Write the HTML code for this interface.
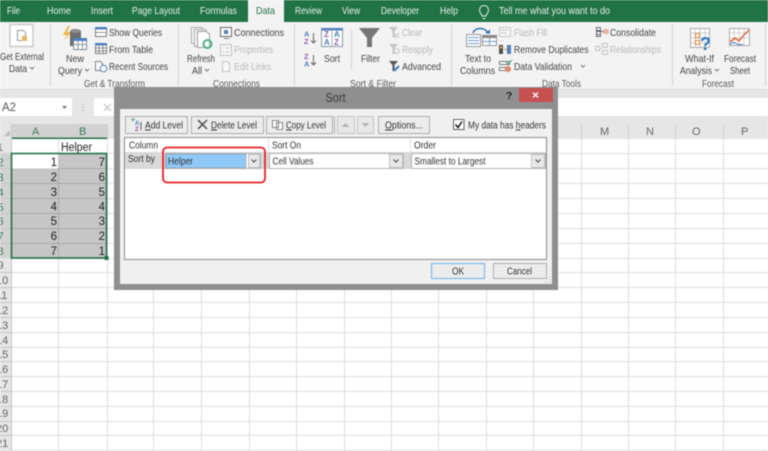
<!DOCTYPE html>
<html><head><meta charset="utf-8"><title>Excel Sort</title>
<style>
html,body{margin:0;padding:0;background:#fff;width:768px;height:451px;overflow:hidden}
svg{display:block;filter:blur(.4px)}
text{font-family:"Liberation Sans",sans-serif;font-size:10.4px;fill:#444;white-space:pre}
.t{fill:#e6f0ea;font-size:10.5px}
.d{fill:#b9b9b9}
.g{fill:#5a5a5a}
.h{fill:#3a7a55;font-size:11px}
.r{fill:#666;font-size:11px}
.n{fill:#222;font-size:11.500px}
.dg{fill:#333;font-size:9.900px}
.btn{fill:#ececec;stroke:#adadad}
.cb{fill:#fff;stroke:#b5b5b5}
.ab{fill:#e8e8e8;stroke:#c2c2c2}
</style></head><body>
<svg width="768" height="451" viewBox="0 0 768 451" xmlns="http://www.w3.org/2000/svg">
<!-- sheet -->
<rect width="768" height="451" fill="#fff"/>
<g stroke="#dcdcdc" stroke-width="1">
<path d="M12 153.5H768M12 168.5H768M12 183.5H768M12 198.5H768M12 213.5H768M12 228.5H768M12 243.5H768M12 258.5H768M12 272.5H768M12 287.5H768M12 302.5H768M12 317.5H768M12 332.5H768M12 347.5H768M12 361.5H768M12 376.5H768M12 391.5H768M12 406.5H768M12 421.5H768M12 435.5H768M12 450.5H768"/>
<path d="M58.500 139V451M107.500 139V451M153.500 139V451M201.500 139V451M249.500 139V451M296.500 139V451M344.500 139V451M391.500 139V451M438.500 139V451M486.500 139V451M533.500 139V451M581.500 139V451M628.500 139V451M675.500 139V451M723.500 139V451"/>
</g>
<!-- tabs -->
<rect width="768" height="22" fill="#217346"/>
<rect x="248" width="36" height="23" fill="#f3f3f3"/>
<text class="t" x="7" y="14" textLength="13" lengthAdjust="spacingAndGlyphs">File</text>
<text class="t" x="47" y="14" textLength="24" lengthAdjust="spacingAndGlyphs">Home</text>
<text class="t" x="91" y="14" textLength="22" lengthAdjust="spacingAndGlyphs">Insert</text>
<text class="t" x="132" y="14" textLength="48" lengthAdjust="spacingAndGlyphs">Page Layout</text>
<text class="t" x="200" y="14" textLength="37" lengthAdjust="spacingAndGlyphs">Formulas</text>
<text x="256" y="14" textLength="19" lengthAdjust="spacingAndGlyphs" style="fill:#217346;font-size:10.500px">Data</text>
<text class="t" x="295" y="14" textLength="27" lengthAdjust="spacingAndGlyphs">Review</text>
<text class="t" x="342" y="14" textLength="18" lengthAdjust="spacingAndGlyphs">View</text>
<text class="t" x="381" y="14" textLength="38" lengthAdjust="spacingAndGlyphs">Developer</text>
<text class="t" x="440" y="14" textLength="18" lengthAdjust="spacingAndGlyphs">Help</text>
<path d="M482 16c0-2-2.500-2.500-2.500-6a4.500 4.500 0 0 1 9 0c0 3.500-2.500 4-2.500 6zM482.500 18.500h3" fill="none" stroke="#e6f0ea"/>
<text class="t" x="499" y="14" textLength="111" lengthAdjust="spacingAndGlyphs">Tell me what you want to do</text>
<!-- ribbon -->
<rect y="22" width="768" height="68" fill="#f3f3f3"/>
<rect y="89" width="768" height="1" fill="#dcdcdc"/>
<rect y="90" width="768" height="34" fill="#e6e6e6"/>
<path d="M50.500 24V86M178.500 24V86M294.500 24V86M351.500 30V70M451.500 24V86M672.500 24V86M765.500 24V86" stroke="#d4d4d4"/>
<!-- Get External Data -->
<rect x="10" y="24.500" width="23" height="22" fill="#fff" stroke="#c9c9c9" stroke-width="1.500"/>
<path d="M17.500 30.500h6l2 2v8h-8z" fill="#fff" stroke="#9a9a9a"/>
<rect x="22" y="36" width="5" height="5" fill="#e9b763"/>
<text x="0" y="60" textLength="44" lengthAdjust="spacingAndGlyphs">Get External</text>
<text x="9" y="72" textLength="18" lengthAdjust="spacingAndGlyphs">Data</text>
<path d="M30 67l2 2 2-2" fill="none" stroke="#777"/>
<!-- New Query -->
<path d="M68 26l-5 9h4l-3 6 7-9h-4l3-6z" fill="#edb649"/>
<path d="M70 32c0-3 11-3 11 0v14H70z" fill="#6d6d6d"/>
<ellipse cx="75.500" cy="31" rx="5.500" ry="2" fill="#8c8c8c"/>
<rect x="73.500" y="38.500" width="13" height="11" fill="#fff" stroke="#7c8b9a"/>
<rect x="73" y="38" width="14" height="3" fill="#4f81bd"/>
<path d="M73.500 44.500h13M78 41v8M82.500 41v8" stroke="#8a9aa8"/>
<text x="66" y="62" textLength="18" lengthAdjust="spacingAndGlyphs">New</text>
<text x="58" y="74" textLength="24" lengthAdjust="spacingAndGlyphs">Query</text>
<path d="M85 69l2 2 2-2" fill="none" stroke="#777"/>
<!-- Small buttons -->
<rect x="95.500" y="27.500" width="11" height="9" fill="#fff" stroke="#7f7f7f"/><rect x="95" y="27" width="12" height="2.500" fill="#4f81bd"/><path d="M96 32.500h10" stroke="#999"/>
<rect x="95.500" y="44.500" width="11" height="9" fill="#fff" stroke="#7f7f7f"/><rect x="95" y="43" width="12" height="2.500" fill="#4f81bd"/><path d="M99 45v9M103 45v9M96 48h10M96 51h10" stroke="#8a8a8a"/>
<path d="M95.500 61.500h5l2 2v7h-7z" fill="#fff" stroke="#7f7f7f"/><circle cx="103.500" cy="68.500" r="3.300" fill="#fff" stroke="#4f81bd"/>
<text x="109" y="36" textLength="53" lengthAdjust="spacingAndGlyphs">Show Queries</text>
<text x="109" y="53" textLength="44" lengthAdjust="spacingAndGlyphs">From Table</text>
<text x="109" y="70" textLength="59" lengthAdjust="spacingAndGlyphs">Recent Sources</text>
<text class="g" x="84" y="87" textLength="61" lengthAdjust="spacingAndGlyphs">Get &amp; Transform</text>
<!-- Connections -->
<path d="M191.500 27.500h11v16h-11z" fill="#f5f5f5" stroke="#aaa"/><path d="M194.500 29.500h11v17h-11z" fill="#f8f8f8" stroke="#aaa"/><path d="M197.500 31.500h9l3 3v13h-12z" fill="#fff" stroke="#999"/>
<circle cx="207.500" cy="44" r="4" fill="none" stroke="#4fae82" stroke-width="2"/>
<text x="187" y="62" textLength="28" lengthAdjust="spacingAndGlyphs">Refresh</text>
<text x="192" y="74" textLength="10" lengthAdjust="spacingAndGlyphs">All</text>
<path d="M205 69l2 2 2-2" fill="none" stroke="#777"/>
<rect x="220.500" y="27.500" width="11" height="9" fill="#fff" stroke="#666"/><rect x="224" y="30" width="4" height="4" fill="#4f81bd"/><path d="M224 38.500h5" stroke="#888"/>
<rect x="220.500" y="44.500" width="11" height="11" fill="#f5f5f5" stroke="#c2c2c2"/><path d="M223 48h1M226 48h3M223 52h1M226 52h3" stroke="#bdbdbd"/>
<path d="M222.500 61.500h5l2 2v8h-7z" fill="#f7f7f7" stroke="#c2c2c2"/>
<text x="234" y="36" textLength="50" lengthAdjust="spacingAndGlyphs">Connections</text>
<text class="d" x="234" y="53" textLength="39" lengthAdjust="spacingAndGlyphs">Properties</text>
<text class="d" x="234" y="70" textLength="37" lengthAdjust="spacingAndGlyphs">Edit Links</text>
<text class="g" x="213" y="87" textLength="47" lengthAdjust="spacingAndGlyphs">Connections</text>
<!-- Sort -->
<text x="304" y="36.500" style="font-size:7.500px;font-weight:bold;fill:#4f81bd">A</text><text x="304" y="44" style="font-size:7.500px;font-weight:bold;fill:#8e5bb5">Z</text>
<path d="M313.500 33v10M311 40.500l2.500 2.500 2.500-2.500" fill="none" stroke="#666"/>
<text x="304" y="59" style="font-size:7.500px;font-weight:bold;fill:#8e5bb5">Z</text><text x="304" y="66.500" style="font-size:7.500px;font-weight:bold;fill:#4f81bd">A</text>
<path d="M313.500 55v10M311 62.500l2.500 2.500 2.500-2.500" fill="none" stroke="#666"/>
<rect x="321.500" y="28.500" width="21" height="18" fill="#fff" stroke="#8a9aa8"/><rect x="321" y="28" width="22" height="2.500" fill="#4f81bd"/><path d="M332 30v16" stroke="#aaa"/>
<text x="324" y="37" style="font-size:8px;font-weight:bold;fill:#8e5bb5">Z</text><text x="324" y="45" style="font-size:8px;font-weight:bold;fill:#4f81bd">A</text>
<text x="334" y="37" style="font-size:8px;font-weight:bold;fill:#4f81bd">A</text><text x="334" y="45" style="font-size:8px;font-weight:bold;fill:#8e5bb5">Z</text>
<text x="324" y="62" textLength="16" lengthAdjust="spacingAndGlyphs">Sort</text>
<path d="M359 28h21l-8 10v9h-5v-9z" fill="#767676"/>
<text x="361" y="62" textLength="19" lengthAdjust="spacingAndGlyphs">Filter</text>
<path d="M389 27h9l-3.500 4v6h-2v-6z" fill="#c4c4c4"/><path d="M394 33l5 5M399 33l-5 5" stroke="#c4c4c4"/>
<path d="M389 44h9l-3.500 4v6h-2v-6z" fill="#c4c4c4"/><circle cx="396.500" cy="51" r="2.500" fill="none" stroke="#c4c4c4"/>
<path d="M389 61h9l-3.500 4v6h-2v-6z" fill="#555"/><path d="M394 71l5-5" stroke="#3f7fc4" stroke-width="2"/>
<text class="d" x="402" y="36" textLength="20" lengthAdjust="spacingAndGlyphs">Clear</text>
<text class="d" x="402" y="53" textLength="31" lengthAdjust="spacingAndGlyphs">Reapply</text>
<text x="402" y="70" textLength="39" lengthAdjust="spacingAndGlyphs">Advanced</text>
<text class="g" x="350" y="87" textLength="46" lengthAdjust="spacingAndGlyphs">Sort &amp; Filter</text>
<!-- Data tools -->
<rect x="466.500" y="34.500" width="14" height="12" fill="#fff" stroke="#999"/><path d="M468 37.500h11M468 40.500h11M468 43.500h11" stroke="#6f9bcf"/>
<rect x="482.500" y="36.500" width="14" height="9" fill="#fff" stroke="#999"/><rect x="482" y="35" width="15" height="3" fill="#888"/><path d="M489.500 38v8M483 41.500h13" stroke="#6f9bcf"/>
<path d="M473 33c2-6 12-6 15 0" fill="none" stroke="#2f6fb5" stroke-width="1.500"/><path d="M485 33.500h5v-4z" fill="#2f6fb5"/>
<text x="465" y="62" textLength="26" lengthAdjust="spacingAndGlyphs">Text to</text>
<text x="460" y="74" textLength="35" lengthAdjust="spacingAndGlyphs">Columns</text>
<path d="M499.500 27.500h11v9h-11z" fill="#f5f5f5" stroke="#c9c9c9"/><path d="M501 30h8M501 33h6" stroke="#c9c9c9"/>
<rect x="499" y="45" width="4" height="9" fill="#4f4f4f"/><rect x="507" y="45" width="4" height="9" fill="#4f81bd"/><path d="M504 49.500h3" stroke="#e08a3c"/><rect x="500" y="46.500" width="2" height="2" fill="#e9b763"/>
<rect x="499.500" y="61.500" width="10" height="3" fill="#fff" stroke="#777"/><rect x="499.500" y="67.500" width="6" height="3" fill="#fff" stroke="#777"/><path d="M506 62l2 2 4-4" fill="none" stroke="#3f9f73"/><circle cx="508" cy="69" r="3" fill="#e08a6c"/>
<text class="d" x="514" y="36" textLength="33" lengthAdjust="spacingAndGlyphs">Flash Fill</text>
<text x="514" y="53" textLength="74.500" lengthAdjust="spacingAndGlyphs">Remove Duplicates</text>
<text x="514" y="70" textLength="58" lengthAdjust="spacingAndGlyphs">Data Validation</text>
<path d="M581 65l2 2 2-2" fill="none" stroke="#777"/>
<rect x="596.500" y="27.500" width="4" height="3" fill="#fff" stroke="#666"/><rect x="596.500" y="31.500" width="4" height="3" fill="#fff" stroke="#666"/><rect x="596.500" y="34.500" width="4" height="2" fill="#fff" stroke="#666"/><path d="M601 31.500h3" stroke="#4f81bd"/><rect x="604" y="29.500" width="4" height="4" fill="#f4b9a0" stroke="#e08a6c" stroke-width=".6"/>
<rect x="595.500" y="46.500" width="4" height="4" fill="none" stroke="#c4c4c4"/><rect x="602.500" y="43.500" width="5" height="4" fill="none" stroke="#c4c4c4"/><rect x="602.500" y="50.500" width="5" height="4" fill="none" stroke="#c4c4c4"/><path d="M600 48.500h2" stroke="#c4c4c4"/>
<text x="610" y="36" textLength="46" lengthAdjust="spacingAndGlyphs">Consolidate</text>
<text class="d" x="610" y="53" textLength="51" lengthAdjust="spacingAndGlyphs">Relationships</text>
<text class="g" x="542" y="87" textLength="39" lengthAdjust="spacingAndGlyphs">Data Tools</text>
<!-- Forecast -->
<rect x="690.500" y="28.500" width="19" height="19" fill="#fff" stroke="#aaa"/><path d="M695 29v18M700 29v18M705 29v18M691 33h18M691 38h18M691 43h18" stroke="#ccc"/>
<rect x="695.500" y="33.500" width="4" height="4" fill="#fff" stroke="#e08a3c"/><rect x="695.500" y="40.500" width="4" height="4" fill="#fff" stroke="#e08a3c"/>
<text x="700" y="50" style="font-size:18px;font-weight:bold;fill:#2f79c4">?</text>
<rect x="729.500" y="28.500" width="20" height="17" fill="#fff" stroke="#aaa"/><path d="M734 29v16M739 29v16M744 29v16M730 33h19M730 38h19" stroke="#d2d2d2"/>
<path d="M730 42l5-4 4 3 4-5 6-6" fill="none" stroke="#e2603a" stroke-width="1.500"/>
<path d="M730 45c2-3 5-3 7-1s4-1 6 1" fill="none" stroke="#4f81bd"/>
<text x="685" y="62" textLength="29" lengthAdjust="spacingAndGlyphs">What-If</text>
<text x="680" y="74" textLength="32" lengthAdjust="spacingAndGlyphs">Analysis</text>
<path d="M715 69l2 2 2-2" fill="none" stroke="#777"/>
<text x="724" y="62" textLength="32" lengthAdjust="spacingAndGlyphs">Forecast</text>
<text x="730" y="74" textLength="20" lengthAdjust="spacingAndGlyphs">Sheet</text>
<text class="g" x="702" y="87" textLength="32" lengthAdjust="spacingAndGlyphs">Forecast</text>
<!-- Formula bar -->
<rect y="98" width="72" height="18" fill="#fff"/>
<text x="2" y="111" style="font-size:11.500px;fill:#555">A2</text>
<path d="M62 106h5l-2.500 3z" fill="#777"/>
<path d="M83 104v1M83 107v1M83 110v1" stroke="#999"/>
<rect x="94" y="98" width="674" height="18" fill="#fff"/>
<path d="M104 104l7 7M111 104l-7 7" stroke="#c8c8c8" stroke-width="1.300"/>
<!-- headers -->
<rect y="124" width="768" height="15" fill="#e6e6e6"/>
<rect y="124" width="12" height="327" fill="#e6e6e6"/>
<rect x="12" y="124" width="95" height="14" fill="#d2d2d2"/>
<rect x="12" y="137.500" width="95" height="1.500" fill="#217346"/>
<rect y="153" width="11" height="105" fill="#d2d2d2"/>
<path d="M11.500 124V451" stroke="#c6c6c6"/>
<path d="M4 136l6-6v6z" fill="#bdbdbd"/>
<path d="M58.500 125v13M107.500 125v14M153.500 125v14M201.500 125v14M249.500 125v14M296.500 125v14M344.500 125v14M391.500 125v14M438.500 125v14M486.500 125v14M533.500 125v14M581.500 125v14M628.500 125v14M675.500 125v14M723.500 125v14" stroke="#cfcfcf"/>
<text class="h" x="32" y="135">A</text><text class="h" x="79" y="135">B</text>
<text class="r" x="600" y="135">M</text><text class="r" x="646" y="135">N</text><text class="r" x="692" y="135">O</text><text class="r" x="741" y="135">P</text>
<text class="r" x="-3" y="151">1</text><text class="h" x="-2.500" y="166">2</text><text class="h" x="-2.500" y="181">3</text><text class="h" x="-2.500" y="196">4</text><text class="h" x="-2.500" y="211">5</text><text class="h" x="-2.500" y="225">6</text><text class="h" x="-2.500" y="240">7</text><text class="h" x="-2.500" y="255">8</text>
<text class="r" x="-2.500" y="269">9</text><text class="r" x="-4" y="284">10</text><text class="r" x="-4" y="299">11</text><text class="r" x="-4" y="314">12</text><text class="r" x="-4" y="329">13</text><text class="r" x="-4" y="344">14</text><text class="r" x="-4" y="358">15</text><text class="r" x="-4" y="373">16</text><text class="r" x="-4" y="388">17</text><text class="r" x="-4" y="403">18</text><text class="r" x="-4" y="417">19</text><text class="r" x="-4" y="432">20</text><text class="r" x="-4" y="447">21</text>
<path d="M0 168.500h11M0 183.500h11M0 198.500h11M0 213.500h11M0 228.500h11M0 243.500h11M0 272.500h11M0 287.500h11M0 302.500h11M0 317.500h11M0 332.500h11M0 347.500h11M0 361.500h11M0 376.500h11M0 391.500h11M0 406.500h11M0 421.500h11M0 435.500h11" stroke="#c6c6c6"/>
<!-- selection -->
<rect x="12" y="154" width="95" height="104" fill="#c6c6c6"/>
<rect x="12" y="154" width="46" height="14.500" fill="#fff"/>
<path d="M12 183.500h95M12 198.500h95M12 213.500h95M12 228.500h95M12 243.500h95M58 168.500h49M58.500 168v90" stroke="#a9a9a9"/>
<rect x="11.500" y="153.500" width="95" height="104.500" fill="none" stroke="#217346" stroke-width="1.600"/>
<rect x="104.500" y="256" width="4" height="4" fill="#217346"/>
<text x="61" y="151" textLength="31" lengthAdjust="spacingAndGlyphs" style="font-size:11.500px;fill:#222">Helper</text>
<text class="n" x="57" y="166" text-anchor="end">1</text><text class="n" x="57" y="181" text-anchor="end">2</text><text class="n" x="57" y="196" text-anchor="end">3</text><text class="n" x="57" y="210.500" text-anchor="end">4</text><text class="n" x="57" y="225" text-anchor="end">5</text><text class="n" x="57" y="240" text-anchor="end">6</text><text class="n" x="57" y="255" text-anchor="end">7</text>
<text class="n" x="105" y="166" text-anchor="end">7</text><text class="n" x="105" y="181" text-anchor="end">6</text><text class="n" x="105" y="196" text-anchor="end">5</text><text class="n" x="105" y="210.500" text-anchor="end">4</text><text class="n" x="105" y="225" text-anchor="end">3</text><text class="n" x="105" y="240" text-anchor="end">2</text><text class="n" x="105" y="255" text-anchor="end">1</text>
<!-- dialog -->
<rect x="114" y="87" width="444" height="203" fill="#8f8f8f"/>
<rect x="120" y="109" width="432" height="175" fill="#f0f0f0"/>
<text x="325.500" y="102" textLength="20" lengthAdjust="spacingAndGlyphs" style="font-size:12.500px;fill:#3a3a3a">Sort</text>
<text x="506" y="99" style="font-size:10.500px;font-weight:bold;fill:#222">?</text>
<rect x="519" y="88" width="34" height="14" fill="#c75050"/>
<path d="M533 92.500l5 5M538 92.500l-5 5" stroke="#fff" stroke-width="1.300"/>
<!-- toolbar -->
<rect class="btn" x="125.500" y="116.500" width="62" height="17"/>
<rect class="btn" x="191.500" y="116.500" width="72" height="17"/>
<rect class="btn" x="266.500" y="116.500" width="66" height="17"/>
<path d="M334.500 116v18" stroke="#adadad"/>
<rect x="337.500" y="116.500" width="17" height="17" fill="#e8e8e8" stroke="#c4c4c4"/>
<rect x="357.500" y="116.500" width="16" height="17" fill="#e8e8e8" stroke="#c4c4c4"/>
<rect class="btn" x="378.500" y="116.500" width="51" height="17"/>
<path d="M341.500 127l4-4 4 4z" fill="#b5b5b5"/><path d="M361.500 123l4 4 4-4z" fill="#b5b5b5"/>
<text x="131" y="122" style="font-size:7px;font-weight:bold;fill:#3f9f73">+</text>
<text x="135" y="125" style="font-size:6px;font-weight:bold;fill:#4f81bd">A</text><text x="135" y="131" style="font-size:6px;font-weight:bold;fill:#8e5bb5">Z</text>
<path d="M141 122v8" stroke="#555"/>
<text class="dg" x="145" y="128.500" textLength="38" lengthAdjust="spacingAndGlyphs"><tspan text-decoration="underline">A</tspan>dd Level</text>
<path d="M198 120l9 9M207 120l-9 9" stroke="#4a4a4a" stroke-width="1.500"/>
<text class="dg" x="211" y="128.500" textLength="46" lengthAdjust="spacingAndGlyphs"><tspan text-decoration="underline">D</tspan>elete Level</text>
<path d="M272.500 120.500h6v7h-6zM276.500 122.500h6v7h-6z" fill="#fff" stroke="#888"/>
<text class="dg" x="286" y="128.500" textLength="40" lengthAdjust="spacingAndGlyphs"><tspan text-decoration="underline">C</tspan>opy Level</text>
<text class="dg" x="385" y="128.500" textLength="38" lengthAdjust="spacingAndGlyphs"><tspan text-decoration="underline">O</tspan>ptions...</text>
<rect x="453.500" y="119.500" width="10.500" height="10" fill="#fff" stroke="#666"/>
<path d="M455.500 124.500l2.500 3 4-6" fill="none" stroke="#111" stroke-width="1.500"/>
<text class="dg" x="468" y="128.500" textLength="78" lengthAdjust="spacingAndGlyphs">My data has <tspan text-decoration="underline">h</tspan>eaders</text>
<!-- list -->
<rect x="124.500" y="137.500" width="422" height="122" fill="#fff" stroke="#8a8a8a"/>
<path d="M268.500 138v14M410.500 138v14" stroke="#e2e2e2"/>
<text class="dg" x="129" y="148.500" textLength="29" lengthAdjust="spacingAndGlyphs">Column</text>
<text class="dg" x="272" y="148.500" textLength="29" lengthAdjust="spacingAndGlyphs">Sort On</text>
<text class="dg" x="414" y="148.500" textLength="22" lengthAdjust="spacingAndGlyphs">Order</text>
<rect x="125" y="152" width="421" height="17" fill="#d9d9d9"/>
<text class="dg" x="128" y="162" textLength="27" lengthAdjust="spacingAndGlyphs">Sort by</text>
<rect x="165.500" y="153.500" width="95" height="15" fill="#fff" stroke="#b5b5b5"/>
<rect x="166" y="154" width="80" height="14" fill="#90c8f6" stroke="#5a5a5a" stroke-dasharray="1 1" stroke-width=".6"/>
<rect class="ab" x="248.500" y="154.500" width="11" height="13"/>
<path d="M251.500 159.500l2.500 2.500 2.500-2.500" fill="none" stroke="#555" stroke-width="1.200"/>
<text class="dg" x="168" y="164.500" textLength="25" lengthAdjust="spacingAndGlyphs">Helper</text>
<rect class="cb" x="269.500" y="153.500" width="134" height="15"/>
<rect class="ab" x="389.500" y="154.500" width="13" height="13"/>
<path d="M393.500 159.500l2.500 2.500 2.500-2.500" fill="none" stroke="#555" stroke-width="1.200"/>
<text class="dg" x="272.500" y="164.500" textLength="41" lengthAdjust="spacingAndGlyphs">Cell Values</text>
<rect class="cb" x="411.500" y="153.500" width="134" height="15"/>
<rect class="ab" x="531.500" y="154.500" width="13" height="13"/>
<path d="M535.500 159.500l2.500 2.500 2.500-2.500" fill="none" stroke="#555" stroke-width="1.200"/>
<text class="dg" x="414.500" y="164.500" textLength="71" lengthAdjust="spacingAndGlyphs">Smallest to Largest</text>
<rect x="163" y="147.500" width="102" height="35" rx="4" fill="none" stroke="#e8232a" stroke-width="1.800"/>
<!-- OK Cancel -->
<rect x="431.500" y="263.500" width="53" height="15" fill="#ececec" stroke="#7fb8ea" stroke-width="1.200"/>
<rect class="btn" x="493.500" y="263.500" width="53" height="15"/>
<text class="dg" x="452" y="274.500" textLength="12" lengthAdjust="spacingAndGlyphs">OK</text>
<text class="dg" x="507" y="274.500" textLength="25" lengthAdjust="spacingAndGlyphs">Cancel</text>
<path d="M549.500 282h1M547 282h1M549.500 279.500h1M544.500 282h1M547 279.500h1M549.500 277h1" stroke="#b5b5b5"/>
</svg>
</body></html>
